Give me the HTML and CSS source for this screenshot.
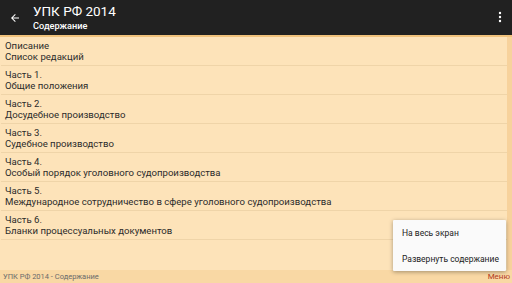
FILE: index.html
```html
<!DOCTYPE html>
<html lang="ru">
<head>
<meta charset="utf-8">
<link rel="stylesheet" href="styles.css">
</head>
<body>
<div class="app">
  <header class="toolbar">
    <svg class="back" width="12" height="12" viewBox="0 0 24 24"><path d="M20 11H7.83l5.59-5.59L12 4l-8 8 8 8 1.41-1.41L7.83 13H20v-2z" fill="#fff"/></svg>
    <div class="titles">
      <div class="title">УПК РФ 2014</div>
      <div class="subtitle">Содержание</div>
    </div>
    <svg class="more" width="4" height="12" viewBox="0 0 4 12"><circle cx="2" cy="2" r="1.2" fill="#fff"/><circle cx="2" cy="6" r="1.2" fill="#fff"/><circle cx="2" cy="10" r="1.2" fill="#fff"/></svg>
  </header>
  <div class="accent"></div>
  <main class="content">
    <ul class="list">
      <li><span>Описание</span><span>Список редакций</span></li>
      <li><span>Часть 1.</span><span>Общие положения</span></li>
      <li><span>Часть 2.</span><span>Досудебное производство</span></li>
      <li><span>Часть 3.</span><span>Судебное производство</span></li>
      <li><span>Часть 4.</span><span>Особый порядок уголовного судопроизводства</span></li>
      <li><span>Часть 5.</span><span>Международное сотрудничество в сфере уголовного судопроизводства</span></li>
      <li><span>Часть 6.</span><span>Бланки процессуальных документов</span></li>
    </ul>
    <div class="scroll"></div>
  </main>
  <footer class="status">
    <span class="status-title">УПК РФ 2014 - Содержание</span>
    <span class="status-menu">Меню</span>
  </footer>
  <div class="popup">
    <div class="popup-item">На весь экран</div>
    <div class="popup-item">Развернуть содержание</div>
  </div>
</div>
</body>
</html>
```

FILE: styles.css
```css
* { box-sizing: border-box; margin: 0; padding: 0; }
html, body { width: 512px; height: 283px; overflow: hidden; }
body { font-family: Roboto, "Noto Sans", sans-serif; background: #fce3b9; }
.app { position: relative; width: 512px; height: 283px; display: flex; flex-direction: column; }
.toolbar { height: 35px; background: #212121; display: flex; align-items: center; padding: 0 8px 0 9px; color: #fff; }
.back { margin-right: 12px; }
.titles { flex: 1; display: flex; flex-direction: column; margin-top: 1px; }
.title { font-size: 13.5px; line-height: 15px; }
.subtitle { font-size: 9.2px; line-height: 13px; font-weight: 500; }
.more { margin-right: 2px; margin-top: -2px; }
.accent { height: 2px; background: #f0c27c; }
.content { flex: 1; display: flex; background: #fde3b9; }
.list { list-style: none; flex: 1; padding-left: 1px; }
.list li { height: 29px; border-bottom: 1px solid #efd4a8; display: flex; flex-direction: column; justify-content: center; padding: 0 0 0 4px; font-size: 9.6px; line-height: 11.5px; color: #2b2b2b; }
.scroll { width: 5px; background: #f7d29c; }
.status { height: 13px; background: #f9d8a4; display: flex; justify-content: space-between; align-items: center; padding: 0 2px 0 3px; font-size: 7.5px; }
.status-title { color: #6b6b6b; }
.status-menu { color: #b23a22; font-size: 8px; }
.popup { position: absolute; left: 393px; top: 220px; width: 113px; height: 51px; background: #fafafa; box-shadow: 0 1px 4px rgba(0,0,0,0.35); border-radius: 1px; padding-top: 2px; }
.popup-item { height: 22px; display: flex; align-items: center; padding-left: 9px; font-size: 8.5px; color: #222; }
.popup-item + .popup-item { margin-top: 4px; }
```
